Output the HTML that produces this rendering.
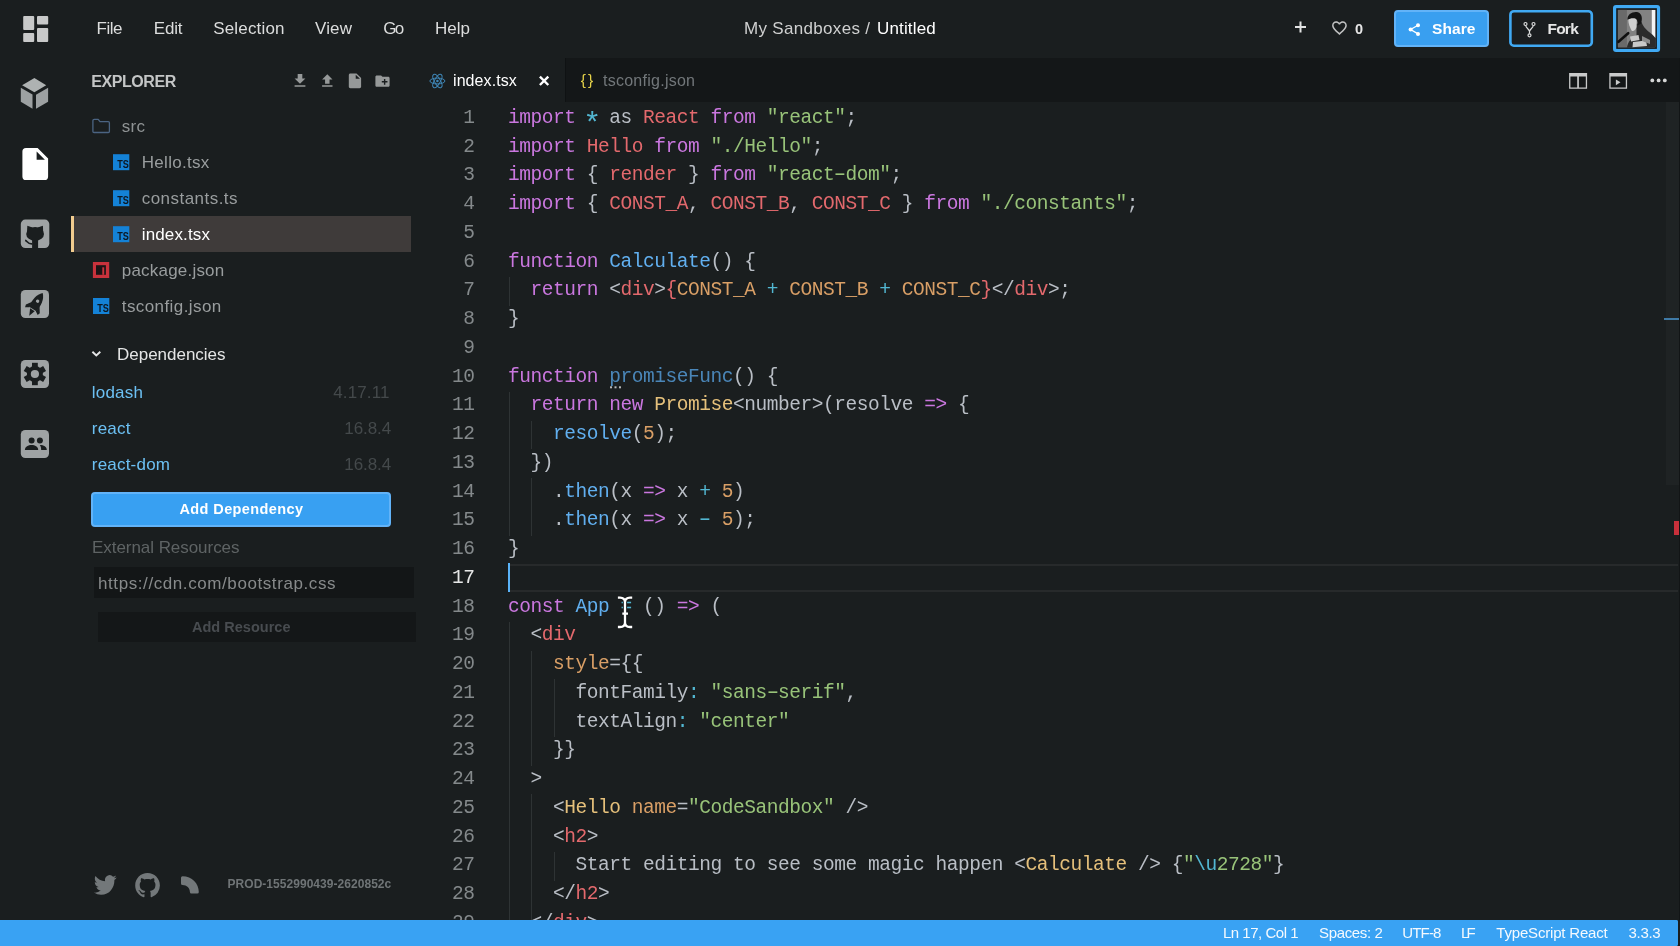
<!DOCTYPE html>
<html lang="en">
<head>
<meta charset="utf-8">
<title>Untitled - CodeSandbox</title>
<style>
*{box-sizing:border-box;margin:0;padding:0}
html,body{width:1680px;height:946px;overflow:hidden;background:#1a1e1f}
body{position:relative;font-family:"Liberation Sans",sans-serif;color:#dcdddd}
#app{position:absolute;left:0;top:0;width:1680px;height:946px;will-change:transform;overflow:hidden}
.abs{position:absolute}
.tx{position:absolute;white-space:pre;display:block}
#header{position:absolute;left:0;top:0;width:1680px;height:58px;background:#1a1e1f}
#activity{position:absolute;left:0;top:58px;width:70px;height:862px;background:#1a1e1f}
#sidebar{position:absolute;left:70px;top:58px;width:341px;height:862px;background:#1a1e1f}
#tabs{position:absolute;left:411px;top:58px;width:1269px;height:44.500px;background:#141718}
#tab1{position:absolute;left:0;top:0;width:155px;height:44.500px;background:#1a1e1f;border-right:1px solid #0f1213}
#editor{position:absolute;left:411px;top:102px;width:1269px;height:818px;background:#1a1e1f;overflow:hidden}
#status{position:absolute;left:0;top:920px;width:1678px;height:26px;background:#39a2f3;border-radius:0 2px 2px 0}
#code{position:absolute;left:0;top:0;width:1680px;height:920px;overflow:hidden;font-family:"Liberation Mono",monospace;font-size:19.5px;letter-spacing:-0.452px}
.cl{position:absolute;left:508px;height:29px;line-height:29px;white-space:pre;color:#b9bec5}
.ln{position:absolute;left:411px;width:63.5px;height:29px;line-height:29px;text-align:right;color:#84898b;white-space:pre}
.ln.cur{color:#e6e7e7}
.ig{position:absolute;width:1px;background:#2e3334;display:block}
.k{color:#ca77df}.r{color:#e3696d}.g{color:#98c379}.c{color:#52b7d2}.b{color:#61afef}
.o{color:#d99f66}.y{color:#e5c07b}.d{color:#b9bec5}.u{color:#4a86b8}
.ast{display:inline-block;width:11.250px;height:20px;font-size:30px;line-height:42px;letter-spacing:0;text-indent:-3.400px;vertical-align:top;overflow:visible}
.hy{display:inline-block;transform:scaleX(1.650)}
.sel{position:absolute;left:71px;top:216px;width:340px;height:36px;background:#3f3b3a;border-left:3px solid #f2cc8f}
.btn{position:absolute;border-radius:4px}
svg{position:absolute;overflow:visible}
</style>
</head>
<body>
<div id="app">
<div id="header"></div>
<div id="activity"></div>
<div id="sidebar"></div>
<div id="tabs"><div id="tab1"></div></div>
<div id="editor"></div>
<div id="status"></div>

<!-- selected file row -->
<div class="sel"></div>

<!-- header buttons -->
<div class="btn" style="left:1394px;top:10px;width:95px;height:37px;background:#399ff0;border:2px solid #62b3f8"></div>

<!-- sidebar buttons / inputs -->
<div class="btn" style="left:91px;top:492px;width:300px;height:35px;background:#38a0f2;border:2px solid #62b3f8"></div>
<div class="abs" style="left:93.600px;top:567.100px;width:320.200px;height:31.400px;background:#131617"></div>
<div class="abs" style="left:97.500px;top:611.800px;width:318.500px;height:30px;background:#141718"></div>

<!-- editor decorations -->
<div class="abs" style="left:510px;top:563.500px;width:1168px;height:28px;border-top:2px solid #272a2b;border-bottom:2px solid #272a2b"></div>
<div class="abs" style="left:508px;top:563px;width:2.300px;height:29px;background:#5ab3f8"></div>
<div class="abs" style="left:1666px;top:102px;width:12.600px;height:383px;background:#1f2324"></div>
<div class="abs" style="left:1678.600px;top:58px;width:1.400px;height:862px;background:#121516"></div>
<div class="abs" style="left:1663.500px;top:317.700px;width:15px;height:2.500px;background:#3f7aa6"></div>
<div class="abs" style="left:1674px;top:521px;width:5px;height:14px;background:#c8303b"></div>

<div id="code">
<div class="ln" style="top:104.00px">1</div>
<div class="cl" style="top:104.00px"><span class="k">import</span> <span class="c ast">*</span> <span class="d">as</span> <span class="r">React</span> <span class="k">from</span> <span class="g">&quot;react&quot;</span><span class="d">;</span></div>
<div class="ln" style="top:133.00px">2</div>
<div class="cl" style="top:133.00px"><span class="k">import</span> <span class="r">Hello</span> <span class="k">from</span> <span class="g">&quot;./Hello&quot;</span><span class="d">;</span></div>
<div class="ln" style="top:161.00px">3</div>
<div class="cl" style="top:161.00px"><span class="k">import</span><span class="d"> { </span><span class="r">render</span><span class="d"> } </span><span class="k">from</span> <span class="g">&quot;react<span class="hy">-</span>dom&quot;</span><span class="d">;</span></div>
<div class="ln" style="top:190.00px">4</div>
<div class="cl" style="top:190.00px"><span class="k">import</span><span class="d"> { </span><span class="r">CONST_A</span><span class="d">, </span><span class="r">CONST_B</span><span class="d">, </span><span class="r">CONST_C</span><span class="d"> } </span><span class="k">from</span> <span class="g">&quot;./constants&quot;</span><span class="d">;</span></div>
<div class="ln" style="top:219.00px">5</div>
<div class="ln" style="top:248.00px">6</div>
<div class="cl" style="top:248.00px"><span class="k">function</span> <span class="b">Calculate</span><span class="d">() {</span></div>
<div class="ln" style="top:276.00px">7</div>
<div class="cl" style="top:276.00px">  <span class="k">return</span><span class="d"> &lt;</span><span class="r">div</span><span class="d">&gt;</span><span class="r">{</span><span class="o">CONST_A</span> <span class="c">+</span> <span class="o">CONST_B</span> <span class="c">+</span> <span class="o">CONST_C</span><span class="r">}</span><span class="d">&lt;/</span><span class="r">div</span><span class="d">&gt;;</span></div>
<div class="ln" style="top:305.00px">8</div>
<div class="cl" style="top:305.00px"><span class="d">}</span></div>
<div class="ln" style="top:334.00px">9</div>
<div class="ln" style="top:363.00px">10</div>
<div class="cl" style="top:363.00px"><span class="k">function</span> <span class="u">promiseFunc</span><span class="d">() {</span></div>
<div class="ln" style="top:391.00px">11</div>
<div class="cl" style="top:391.00px">  <span class="k">return</span> <span class="k">new</span> <span class="y">Promise</span><span class="d">&lt;number&gt;(resolve </span><span class="k">=&gt;</span><span class="d"> {</span></div>
<div class="ln" style="top:420.00px">12</div>
<div class="cl" style="top:420.00px">    <span class="b">resolve</span><span class="d">(</span><span class="o">5</span><span class="d">);</span></div>
<div class="ln" style="top:449.00px">13</div>
<div class="cl" style="top:449.00px">  <span class="d">})</span></div>
<div class="ln" style="top:478.00px">14</div>
<div class="cl" style="top:478.00px">    <span class="d">.</span><span class="b">then</span><span class="d">(x </span><span class="k">=&gt;</span><span class="d"> x </span><span class="c">+</span> <span class="o">5</span><span class="d">)</span></div>
<div class="ln" style="top:506.00px">15</div>
<div class="cl" style="top:506.00px">    <span class="d">.</span><span class="b">then</span><span class="d">(x </span><span class="k">=&gt;</span><span class="d"> x </span><span class="c"><span class="hy">-</span></span> <span class="o">5</span><span class="d">);</span></div>
<div class="ln" style="top:535.00px">16</div>
<div class="cl" style="top:535.00px"><span class="d">}</span></div>
<div class="ln cur" style="top:564.00px">17</div>
<div class="ln" style="top:593.00px">18</div>
<div class="cl" style="top:593.00px"><span class="k">const</span> <span class="b">App</span> <span class="c">=</span><span class="d"> () </span><span class="k">=&gt;</span><span class="d"> (</span></div>
<div class="ln" style="top:621.00px">19</div>
<div class="cl" style="top:621.00px">  <span class="d">&lt;</span><span class="r">div</span></div>
<div class="ln" style="top:650.00px">20</div>
<div class="cl" style="top:650.00px">    <span class="o">style</span><span class="d">={{</span></div>
<div class="ln" style="top:679.00px">21</div>
<div class="cl" style="top:679.00px">      <span class="d">fontFamily</span><span class="c">:</span> <span class="g">&quot;sans<span class="hy">-</span>serif&quot;</span><span class="d">,</span></div>
<div class="ln" style="top:708.00px">22</div>
<div class="cl" style="top:708.00px">      <span class="d">textAlign</span><span class="c">:</span> <span class="g">&quot;center&quot;</span></div>
<div class="ln" style="top:736.00px">23</div>
<div class="cl" style="top:736.00px">    <span class="d">}}</span></div>
<div class="ln" style="top:765.00px">24</div>
<div class="cl" style="top:765.00px">  <span class="d">&gt;</span></div>
<div class="ln" style="top:794.00px">25</div>
<div class="cl" style="top:794.00px">    <span class="d">&lt;</span><span class="y">Hello</span> <span class="o">name</span><span class="d">=</span><span class="g">&quot;CodeSandbox&quot;</span><span class="d"> /&gt;</span></div>
<div class="ln" style="top:823.00px">26</div>
<div class="cl" style="top:823.00px">    <span class="d">&lt;</span><span class="r">h2</span><span class="d">&gt;</span></div>
<div class="ln" style="top:851.00px">27</div>
<div class="cl" style="top:851.00px">      <span class="d">Start editing to see some magic happen &lt;</span><span class="y">Calculate</span><span class="d"> /&gt; {</span><span class="g">&quot;</span><span class="c">\u</span><span class="g">2728&quot;</span><span class="d">}</span></div>
<div class="ln" style="top:880.00px">28</div>
<div class="cl" style="top:880.00px">    <span class="d">&lt;/</span><span class="r">h2</span><span class="d">&gt;</span></div>
<div class="ln" style="top:909.00px">29</div>
<div class="cl" style="top:909.00px">  <span class="d">&lt;/</span><span class="r">div</span><span class="d">&gt;</span></div>
<i class="ig" style="left:508.50px;top:276.90px;height:28.75px"></i>
<i class="ig" style="left:508.50px;top:391.90px;height:143.75px"></i>
<i class="ig" style="left:531.00px;top:420.65px;height:28.75px"></i>
<i class="ig" style="left:531.00px;top:478.15px;height:57.50px"></i>
<i class="ig" style="left:508.50px;top:621.90px;height:316.25px"></i>
<i class="ig" style="left:531.00px;top:650.65px;height:115.00px"></i>
<i class="ig" style="left:553.50px;top:679.40px;height:57.50px"></i>
<i class="ig" style="left:531.00px;top:794.40px;height:143.75px"></i>
<i class="ig" style="left:553.50px;top:851.90px;height:28.75px"></i>
</div>
<div id="status2" class="abs" style="left:0;top:920px;width:1678px;height:26px;background:#39a2f3;border-radius:0 2px 2px 0"></div>

<!-- ICONS -->
<svg id="icons" width="1680" height="946" viewBox="0 0 1680 946" style="left:0;top:0">
<rect x="23.2" y="16" width="11" height="14" rx="1" fill="#c8c9c9"/>
<rect x="37" y="16" width="11.2" height="8.5" rx="1" fill="#c8c9c9"/>
<rect x="23.2" y="33" width="11" height="9" rx="1" fill="#c8c9c9"/>
<rect x="37" y="28" width="11.2" height="14" rx="1" fill="#c8c9c9"/>
<path fill="#aeb2b2" d="M34.4 78 46.2 85.3 34.4 92.3 22.1 85.3Z"/>
<path fill="#9da1a2" d="M20.8 87.8 32.5 94.5V108.8L20.8 101.8Z"/>
<path fill="#9da1a2" d="M48.1 87.8 36 94.8V108.8L48.1 101.8Z"/>
<path fill="#ffffff" d="M26 148H37.6L48.1 158.5V176.4a3.6 3.6 0 0 1-3.6 3.6H26a3.6 3.6 0 0 1-3.6-3.6V151.6A3.6 3.6 0 0 1 26 148Z"/>
<path fill="#1a1e1f" d="M36.6 151.6V159.7H44.9Z"/>
<rect x="20.8" y="219.6" width="28.5" height="28.5" rx="4.5" fill="#9fa3a4"/>
<g fill="#1a1e1f"><ellipse cx="35.100" cy="233.900" rx="8.900" ry="7"/><path d="M27.300 225.800 32.500 227.600 27 232.500Z"/><path d="M42.900 225.800 37.700 227.600 43.200 232.500Z"/><path d="M32.100 239H38.100V248.300H32.100Z"/><path fill="none" stroke="#1a1e1f" stroke-width="1.700" d="M25.100 240.300C27.500 240.800 27.300 244.300 32.300 243.900"/></g>
<rect x="20.8" y="289.9" width="28.2" height="28.2" rx="4.5" fill="#9fa3a4"/>
<g transform="translate(35.6 304.4) rotate(32)" fill="#1a1e1f"><path d="M0-13.4C4.6-9 5.6-2 4.2 5.4H-4.2C-5.6-2-4.600-9 0-13.400Z"/><path d="M-4.3-0.500-8.200 5.200-7.400 8-3.800 5.600Z"/><path d="M4.300-0.500 8.200 5.200 7.400 8 3.800 5.600Z"/><path d="M-2.600 6.200 0.600 13 2.800 6.200Z"/><circle cx="0" cy="-3.800" r="1.700" fill="#9fa3a4"/></g>
<rect x="20.8" y="359.9" width="28.2" height="28.2" rx="4.5" fill="#9fa3a4"/>
<g transform="translate(34.9 374)" fill="#1a1e1f"><circle r="8"/><rect x="-2.900" y="-11.200" width="5.800" height="6" transform="rotate(0)"/><rect x="-2.900" y="-11.200" width="5.800" height="6" transform="rotate(60)"/><rect x="-2.900" y="-11.200" width="5.800" height="6" transform="rotate(120)"/><rect x="-2.900" y="-11.200" width="5.800" height="6" transform="rotate(180)"/><rect x="-2.900" y="-11.200" width="5.800" height="6" transform="rotate(240)"/><rect x="-2.900" y="-11.200" width="5.800" height="6" transform="rotate(300)"/><circle r="4.100" fill="#9fa3a4"/></g>
<rect x="20.8" y="429.9" width="28.2" height="28.2" rx="4.5" fill="#9fa3a4"/>
<g fill="#1a1e1f"><circle cx="31.6" cy="440.4" r="3"/><circle cx="39.9" cy="440.4" r="3"/><path d="M24.900 449.900C24.900 446.800 28.200 445.100 31.600 445.100S38.200 446.800 38.200 449.900Z"/><path d="M39.800 445.100C43.800 445.100 46.800 446.800 46.800 449.900H41.200C41.200 447.900 40.800 446.400 39.800 445.100Z"/></g>
<path transform="translate(290.74 71.62) scale(0.7714 0.7588)" fill="#969999"  d="M19 9h-4V3H9v6H5l7 7 7-7zM5 18v2h14v-2H5z"/>
<path transform="translate(318.39 72.09) scale(0.7429 0.7353)" fill="#969999"  d="M9 16h6v-6h4l-7-7-7 7h4zm-4 2h14v2H5z"/>
<path transform="translate(345.73 72.14) scale(0.7688 0.7300)" fill="#969999"  d="M6 2c-1.1 0-1.99.9-1.99 2L4 20c0 1.1.89 2 1.99 2H18c1.1 0 2-.9 2-2V8l-6-6H6zm7 7V3.5L18.5 9H13z"/>
<path transform="translate(373.98 72.55) scale(0.7100 0.7125)" fill="#969999"  d="M20 6h-8l-2-2H4c-1.11 0-1.99.89-1.99 2L2 18c0 1.11.89 2 2 2h16c1.11 0 2-.89 2-2V8c0-1.11-.89-2-2-2zm-1 8h-3v3h-2v-3h-3v-2h3V9h2v3h3v2z"/>
<path fill="none" stroke="#4b6482" stroke-width="1.300" stroke-linejoin="round" d="M94.300 119.400H98.200L100 121.700H108.300Q109.400 121.700 109.400 122.800V131.400Q109.400 132.500 108.300 132.500H94Q92.900 132.500 92.900 131.400V120.600Q92.900 119.400 94.300 119.400Z"/>
<rect x="113" y="154.2" width="16.300" height="16" fill="#1482d7"/>
<text x="117.30" y="168.20" font-family="Liberation Sans, sans-serif" font-weight="700" font-size="10.400" fill="#0d1823" textLength="11.600" lengthAdjust="spacingAndGlyphs">TS</text>
<rect x="113" y="190.2" width="16.300" height="16" fill="#1482d7"/>
<text x="117.30" y="204.20" font-family="Liberation Sans, sans-serif" font-weight="700" font-size="10.400" fill="#0d1823" textLength="11.600" lengthAdjust="spacingAndGlyphs">TS</text>
<rect x="113" y="226.2" width="16.300" height="16" fill="#1482d7"/>
<text x="117.30" y="240.20" font-family="Liberation Sans, sans-serif" font-weight="700" font-size="10.400" fill="#0d1823" textLength="11.600" lengthAdjust="spacingAndGlyphs">TS</text>
<rect x="93" y="298" width="16.300" height="16" fill="#1482d7"/>
<text x="97.30" y="312.00" font-family="Liberation Sans, sans-serif" font-weight="700" font-size="10.400" fill="#0d1823" textLength="11.600" lengthAdjust="spacingAndGlyphs">TS</text>
<rect x="92.900" y="262" width="16.300" height="16" fill="#c8323c"/>
<rect x="96" y="265.200" width="9.900" height="9.600" fill="#1c1416"/>
<rect x="102.300" y="267.300" width="1.900" height="7.500" fill="#c8323c"/>
<path fill="none" stroke="#e4e5e5" stroke-width="1.900" d="M92.400 351.700 96.300 355.500 100.300 351.700"/>
<path transform="translate(93.90 872.83) scale(0.9500 1.0103)" fill="#73787a"  d="M23.953 4.57a10 10 0 01-2.825.775 4.958 4.958 0 002.163-2.723c-.951.555-2.005.959-3.127 1.184a4.92 4.92 0 00-8.384 4.482C7.69 8.095 4.067 6.13 1.64 3.162a4.822 4.822 0 00-.666 2.475c0 1.71.87 3.213 2.188 4.096a4.904 4.904 0 01-2.228-.616v.06a4.923 4.923 0 003.946 4.827 4.996 4.996 0 01-2.212.085 4.936 4.936 0 004.604 3.417 9.867 9.867 0 01-6.102 2.105c-.39 0-.779-.023-1.17-.067a13.995 13.995 0 007.557 2.209c9.053 0 13.998-7.496 13.998-13.985 0-.21 0-.42-.015-.63A9.935 9.935 0 0024 4.59z"/>
<path transform="translate(135.20 873.10) scale(1.5437)" fill="#73787a" d="M8 0C3.58 0 0 3.58 0 8c0 3.54 2.29 6.53 5.47 7.59.4.07.55-.17.55-.38 0-.19-.01-.82-.01-1.49-2.01.37-2.53-.49-2.69-.94-.09-.23-.48-.94-.82-1.13-.28-.15-.68-.52-.01-.53.63-.01 1.08.58 1.23.82.72 1.21 1.87.87 2.33.66.07-.52.28-.87.51-1.07-1.78-.2-3.64-.89-3.64-3.95 0-.87.31-1.59.82-2.15-.08-.2-.36-1.02.08-2.12 0 0 .67-.21 2.2.82.64-.18 1.32-.27 2-.27.68 0 1.36.09 2 .27 1.53-1.04 2.2-.82 2.2-.82.44 1.1.16 1.92.08 2.12.51.56.82 1.27.82 2.15 0 3.07-1.87 3.75-3.65 3.95.29.25.54.73.54 1.48 0 1.07-.01 1.93-.01 2.2 0 .21.15.46.55.38A8.013 8.013 0 0016 8c0-4.42-3.58-8-8-8z"/>
<path fill="#73787a" d="M181 877.700Q181 876.200 182.500 876.200C192 876.200 198.800 883.500 198.800 892.100Q198.800 893.600 197.300 893.600H191.400Q189.900 893.600 189.900 892.100C189.900 888.300 186.800 885.100 182.500 885.100Q181 885.100 181 883.600Z"/>
<g transform="translate(437.400 81)" fill="none" stroke="#3f86b6" stroke-width="1"><ellipse rx="7.500" ry="2.900"/><ellipse rx="7.500" ry="2.900" transform="rotate(60)"/><ellipse rx="7.500" ry="2.900" transform="rotate(120)"/><circle r="1.300" fill="#3f86b6" stroke="none"/></g>
<path fill="none" stroke="#ffffff" stroke-width="2.400" d="M539.900 76.700 548.300 85M548.300 76.700 539.900 85"/>
<path fill="#c9caca" fill-rule="evenodd" d="M1569.100 73.100H1587.100V88.800H1569.100ZM1570.400 76.600V87.500H1577.200V76.600ZM1578.900 76.600V87.500H1585.800V76.600Z"/>
<path fill="#c9caca" fill-rule="evenodd" d="M1609.300 73.100H1627.100V88.800H1609.300ZM1610.600 76.600V87.500H1625.800V76.600Z"/>
<path fill="#c9caca" d="M1615.900 79.400V85.300L1620.500 82.350Z"/>
<circle cx="1652.3" cy="80.400" r="1.900" fill="#d6d7d7"/>
<circle cx="1658.6" cy="80.400" r="1.900" fill="#d6d7d7"/>
<circle cx="1664.8" cy="80.400" r="1.900" fill="#d6d7d7"/>
<rect x="1510.400" y="11.200" width="81.400" height="34.500" rx="3.500" fill="#1a1d1f" stroke="#40a9f3" stroke-width="2.600"/>
<path fill="none" stroke="#e2e3e3" stroke-width="2" d="M1295 27H1306M1300.500 21.500V32.500"/>
<path transform="translate(1330.63 19.08) scale(0.7350 0.7411)" fill="#c2c3c3"  d="M16.5 3c-1.74 0-3.41.81-4.5 2.09C10.91 3.81 9.24 3 7.5 3 4.42 3 2 5.42 2 8.500c0 3.780 3.400 6.860 8.550 11.540L12 21.350l1.450-1.320C18.600 15.360 22 12.280 22 8.500 22 5.420 19.580 3 16.500 3zm-4.400 15.550l-.1.100-.1-.100C7.140 14.240 4 11.390 4 8.500 4 6.500 5.500 5 7.500 5c1.540 0 3.040.990 3.570 2.360h1.870C13.460 5.990 14.960 5 16.500 5c2 0 3.500 1.500 3.500 3.500 0 2.890-3.140 5.740-7.900 10.050z"/>
<g fill="#ffffff"><circle cx="1418" cy="25.200" r="2"/><circle cx="1410.600" cy="29.500" r="2"/><circle cx="1418" cy="33.900" r="2"/></g><path fill="none" stroke="#ffffff" stroke-width="1.300" d="M1418 25.200 1410.600 29.500 1418 33.900"/>
<g fill="none" stroke="#dcdddd" stroke-width="1.200"><circle cx="1525.500" cy="24" r="1.500"/><circle cx="1533.500" cy="24" r="1.500"/><circle cx="1529.500" cy="35.300" r="1.500"/><path d="M1525.700 25.500C1526 28 1529.500 29.500 1529.500 31.500V33.800M1533.300 25.500C1533 28 1529.500 29.500 1529.500 31.500"/></g>
<g><rect x="1613" y="5" width="47.100" height="47.100" rx="3" fill="#40a9f3"/><rect x="1616.200" y="8.200" width="40.700" height="40.700" fill="#15181a"/><rect x="1617.900" y="9.900" width="37.400" height="37.400" fill="#828282"/><rect x="1617.900" y="9.900" width="9" height="37.400" fill="#6a6a6a"/><path fill="#f4f4f4" d="M1651.800 9.900H1655.300V38L1651.800 34Z"/><path fill="#2b2b2b" d="M1636.500 24 1641.500 22C1644 30 1652 33 1655.300 38V47.300H1627C1628 42 1631 37.500 1636.500 35.500Z"/><path fill="#c9c9c9" d="M1630 36.500 1638.500 35 1639.500 40 1631 41.500ZM1633 42 1646 40.500 1647 46 1632.500 47.300Z"/><path fill="#8c8c8c" d="M1642 36 1650 40 1650 44 1642 41Z"/><path fill="#cfcfcf" d="M1628.300 19.500C1629.500 17 1634 16.500 1636.800 18.500L1636.500 27C1635.500 30.500 1633 32 1631.500 30.500 1630 27.500 1628.300 23.500 1628.300 19.500Z"/><path fill="#141414" d="M1627.500 19.800C1627 14 1633 11 1638 12.200 1642.500 14 1642.500 19.500 1641 23.500L1637.500 25.500C1638 21.500 1637 19 1634.500 18.300 1632 17.800 1629.500 18.600 1627.500 19.800Z"/><path stroke="#101010" stroke-width="2.600" stroke-linecap="round" d="M1618.500 41.800 1628.200 33.200"/></g>
<g fill="none" stroke-linecap="butt"><path stroke="#16191b" stroke-width="4.200" d="M617.900 597.600H620C623 597.600 625 599.500 625 602.500V622.500C625 625.500 623 627 620 627H617.900M632.200 597.600H630C627 597.600 625 599.500 625 602.500M625 622.500C625 625.500 627 627 630 627H632.200M622 613.600H628.200"/><path stroke="#ffffff" stroke-width="2.300" d="M617.900 597.600H620C623 597.600 625 599.500 625 602.500V622.500C625 625.500 623 627 620 627H617.900M632.200 597.600H630C627 597.600 625 599.500 625 602.500M625 622.500C625 625.500 627 627 630 627H632.200M622.300 613.600H628"/></g>
<rect x="610" y="386.300" width="2" height="2" fill="#b6b8b9"/>
<rect x="614.5" y="386.300" width="2" height="2" fill="#b6b8b9"/>
<rect x="619" y="386.300" width="2" height="2" fill="#b6b8b9"/>
</svg>

<span class="tx" style="left:96.50px;top:19.00px;font-size:17px;line-height:19px;font-weight:400;color:#dcdddd;letter-spacing:-0.469px">File</span>
<span class="tx" style="left:153.75px;top:19.00px;font-size:17px;line-height:19px;font-weight:400;color:#dcdddd;letter-spacing:-0.182px">Edit</span>
<span class="tx" style="left:213.25px;top:19.00px;font-size:17px;line-height:19px;font-weight:400;color:#dcdddd;letter-spacing:0.164px">Selection</span>
<span class="tx" style="left:315.00px;top:19.00px;font-size:17px;line-height:19px;font-weight:400;color:#dcdddd;letter-spacing:0.151px">View</span>
<span class="tx" style="left:383.25px;top:19.00px;font-size:17px;line-height:19px;font-weight:400;color:#dcdddd;letter-spacing:-1.688px">Go</span>
<span class="tx" style="left:435.00px;top:19.00px;font-size:17px;line-height:19px;font-weight:400;color:#dcdddd;letter-spacing:0.010px">Help</span>
<span class="tx" style="left:744.00px;top:19.00px;font-size:17px;line-height:19px;font-weight:400;color:#cfd0d0;letter-spacing:0.315px">My Sandboxes /</span>
<span class="tx" style="left:877.00px;top:19.00px;font-size:17px;line-height:19px;font-weight:400;color:#ffffff;letter-spacing:0.158px">Untitled</span>
<span class="tx" style="left:1355.00px;top:21.00px;font-size:14.5px;line-height:16px;font-weight:700;color:#e6e6e6;letter-spacing:0.172px">0</span>
<span class="tx" style="left:1432.00px;top:20.00px;font-size:15.5px;line-height:17px;font-weight:700;color:#ffffff;letter-spacing:0.102px">Share</span>
<span class="tx" style="left:1547.50px;top:20.00px;font-size:15.5px;line-height:17px;font-weight:700;color:#e6e6e6;letter-spacing:-0.781px">Fork</span>
<span class="tx" style="left:91.25px;top:73.00px;font-size:16px;line-height:17px;font-weight:700;color:#c4c6c6;letter-spacing:-0.431px">EXPLORER</span>
<span class="tx" style="left:121.75px;top:117.00px;font-size:17px;line-height:19px;font-weight:400;color:#8f9394;letter-spacing:0.289px">src</span>
<span class="tx" style="left:141.75px;top:153.00px;font-size:17px;line-height:19px;font-weight:400;color:#999d9e;letter-spacing:0.289px">Hello.tsx</span>
<span class="tx" style="left:141.75px;top:189.00px;font-size:17px;line-height:19px;font-weight:400;color:#999d9e;letter-spacing:0.457px">constants.ts</span>
<span class="tx" style="left:141.75px;top:225.00px;font-size:17px;line-height:19px;font-weight:400;color:#ffffff;letter-spacing:0.145px">index.tsx</span>
<span class="tx" style="left:121.75px;top:261.00px;font-size:17px;line-height:19px;font-weight:400;color:#999d9e;letter-spacing:0.210px">package.json</span>
<span class="tx" style="left:121.75px;top:297.00px;font-size:17px;line-height:19px;font-weight:400;color:#999d9e;letter-spacing:0.417px">tsconfig.json</span>
<span class="tx" style="left:117.00px;top:345.00px;font-size:17px;line-height:19px;font-weight:400;color:#e4e5e5;letter-spacing:-0.018px">Dependencies</span>
<span class="tx" style="left:91.75px;top:383.00px;font-size:17px;line-height:19px;font-weight:400;color:#6cc0f3;letter-spacing:0.228px">lodash</span>
<span class="tx" style="left:91.75px;top:419.00px;font-size:17px;line-height:19px;font-weight:400;color:#6cc0f3;letter-spacing:0.238px">react</span>
<span class="tx" style="left:91.75px;top:455.00px;font-size:17px;line-height:19px;font-weight:400;color:#6cc0f3;letter-spacing:0.215px">react-dom</span>
<span class="tx" style="left:333.25px;top:383.00px;font-size:17px;line-height:19px;font-weight:400;color:#44494b;letter-spacing:0.130px">4.17.11</span>
<span class="tx" style="left:344.25px;top:419.00px;font-size:17px;line-height:19px;font-weight:400;color:#44494b;letter-spacing:-0.053px">16.8.4</span>
<span class="tx" style="left:344.25px;top:455.00px;font-size:17px;line-height:19px;font-weight:400;color:#44494b;letter-spacing:-0.053px">16.8.4</span>
<span class="tx" style="left:179.50px;top:501.00px;font-size:14.5px;line-height:16px;font-weight:700;color:#ffffff;letter-spacing:0.389px">Add Dependency</span>
<span class="tx" style="left:92.00px;top:538.00px;font-size:17px;line-height:19px;font-weight:400;color:#5e6364;letter-spacing:-0.050px">External Resources</span>
<span class="tx" style="left:98.00px;top:574.00px;font-size:17px;line-height:19px;font-weight:400;color:#878a8b;letter-spacing:0.585px">https://cdn.com/bootstrap.css</span>
<span class="tx" style="left:192.00px;top:619.00px;font-size:14.5px;line-height:16px;font-weight:700;color:#484c50;letter-spacing:0.017px">Add Resource</span>
<span class="tx" style="left:227.50px;top:877.00px;font-size:12px;line-height:14px;font-weight:700;color:#6f7476;letter-spacing:0.041px">PROD-1552990439-2620852c</span>
<span class="tx" style="left:453.00px;top:72.00px;font-size:16px;line-height:17px;font-weight:400;color:#ffffff;letter-spacing:0.076px">index.tsx</span>
<span class="tx" style="left:603.00px;top:72.00px;font-size:16px;line-height:17px;font-weight:400;color:#72777a;letter-spacing:0.255px">tsconfig.json</span>
<span class="tx" style="left:580.70px;top:71.00px;font-size:15.5px;line-height:17px;font-weight:400;color:#e6d34a;letter-spacing:2.141px">{}</span>
<span class="tx" style="left:1222.90px;top:924.00px;font-size:15px;line-height:17px;font-weight:400;color:#f4f9fe;letter-spacing:-0.472px">Ln 17, Col 1</span>
<span class="tx" style="left:1319.10px;top:924.00px;font-size:15px;line-height:17px;font-weight:400;color:#f4f9fe;letter-spacing:-0.365px">Spaces: 2</span>
<span class="tx" style="left:1402.30px;top:924.00px;font-size:15px;line-height:17px;font-weight:400;color:#f4f9fe;letter-spacing:-0.850px">UTF-8</span>
<span class="tx" style="left:1460.90px;top:924.00px;font-size:15px;line-height:17px;font-weight:400;color:#f4f9fe;letter-spacing:-2.716px">LF</span>
<span class="tx" style="left:1496.30px;top:924.00px;font-size:15px;line-height:17px;font-weight:400;color:#f4f9fe;letter-spacing:-0.188px">TypeScript React</span>
<span class="tx" style="left:1628.60px;top:924.00px;font-size:15px;line-height:17px;font-weight:400;color:#f4f9fe;letter-spacing:-0.344px">3.3.3</span>
</div>
</body>
</html>
